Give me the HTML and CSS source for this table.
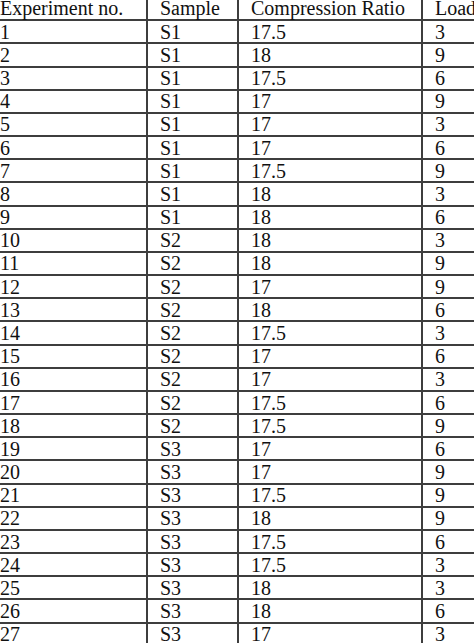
FILE: index.html
```html
<!DOCTYPE html>
<html>
<head>
<meta charset="utf-8">
<link rel="stylesheet" href="styles.css">
</head>
<body>
<div class="frame">
<table class="data">
<colgroup><col class="c1"><col class="c2"><col class="c3"><col class="c4"></colgroup>
<thead>
<tr><th>Experiment no.</th><th>Sample</th><th>Compression Ratio</th><th>Load</th></tr>
</thead>
<tbody>
<tr><td>1</td><td>S1</td><td>17.5</td><td>3</td></tr>
<tr><td>2</td><td>S1</td><td>18</td><td>9</td></tr>
<tr><td>3</td><td>S1</td><td>17.5</td><td>6</td></tr>
<tr><td>4</td><td>S1</td><td>17</td><td>9</td></tr>
<tr><td>5</td><td>S1</td><td>17</td><td>3</td></tr>
<tr><td>6</td><td>S1</td><td>17</td><td>6</td></tr>
<tr><td>7</td><td>S1</td><td>17.5</td><td>9</td></tr>
<tr><td>8</td><td>S1</td><td>18</td><td>3</td></tr>
<tr><td>9</td><td>S1</td><td>18</td><td>6</td></tr>
<tr><td>10</td><td>S2</td><td>18</td><td>3</td></tr>
<tr><td>11</td><td>S2</td><td>18</td><td>9</td></tr>
<tr><td>12</td><td>S2</td><td>17</td><td>9</td></tr>
<tr><td>13</td><td>S2</td><td>18</td><td>6</td></tr>
<tr><td>14</td><td>S2</td><td>17.5</td><td>3</td></tr>
<tr><td>15</td><td>S2</td><td>17</td><td>6</td></tr>
<tr><td>16</td><td>S2</td><td>17</td><td>3</td></tr>
<tr><td>17</td><td>S2</td><td>17.5</td><td>6</td></tr>
<tr><td>18</td><td>S2</td><td>17.5</td><td>9</td></tr>
<tr><td>19</td><td>S3</td><td>17</td><td>6</td></tr>
<tr><td>20</td><td>S3</td><td>17</td><td>9</td></tr>
<tr><td>21</td><td>S3</td><td>17.5</td><td>9</td></tr>
<tr><td>22</td><td>S3</td><td>18</td><td>9</td></tr>
<tr><td>23</td><td>S3</td><td>17.5</td><td>6</td></tr>
<tr><td>24</td><td>S3</td><td>17.5</td><td>3</td></tr>
<tr><td>25</td><td>S3</td><td>18</td><td>3</td></tr>
<tr><td>26</td><td>S3</td><td>18</td><td>6</td></tr>
<tr><td>27</td><td>S3</td><td>17</td><td>3</td></tr>
</tbody>
</table>
</div>
</body>
</html>
```
FILE: styles.css
```css
html, body {
  margin: 0;
  padding: 0;
  background: #fff;
}
body {
  width: 474px;
  height: 643px;
  overflow: hidden;
  font-family: "Liberation Serif", "Times New Roman", serif;
  color: #111;
}
.frame {
  margin-top: -3px;
}
.data {
  border-collapse: collapse;
  table-layout: fixed;
  width: 530px;
  font-size: 20px;
}
.c1 { width: 147px; }
.c2 { width: 91px; }
.c3 { width: 184px; }
.c4 { width: 108px; }
.data th,
.data td {
  height: 23.18px;
  padding: 0 12px;
  line-height: 0.8;
  text-align: left;
  font-weight: normal;
  vertical-align: middle;
  white-space: nowrap;
  border: 2px solid #3e3e3e;
  box-sizing: border-box;
}
.data th:first-child,
.data td:first-child {
  padding-left: 0;
  border-left: none;
}
.data thead th {
  border-top: none;
}
```
